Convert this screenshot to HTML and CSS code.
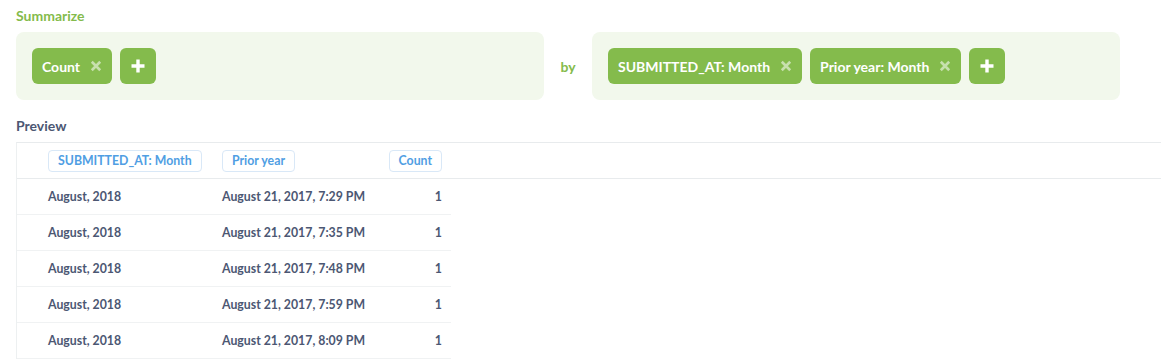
FILE: index.html
```html
<!DOCTYPE html>
<html>
<head>
<meta charset="utf-8">
<link rel="stylesheet" href="styles.css">
</head>
<body>
<div class="page">
  <div class="section-title green">Summarize</div>
  <div class="summarize-row">
    <div class="box">
      <div class="chip">Count <svg class="x" viewBox="0 0 10 10"><path d="M1.5 1.5 L8.5 8.5 M8.5 1.5 L1.5 8.5"/></svg></div>
      <div class="add"><svg class="plus" viewBox="0 0 16 16"><path d="M8 1.5 V14.5 M1.5 8 H14.5"/></svg></div>
    </div>
    <div class="by">by</div>
    <div class="box">
      <div class="chip">SUBMITTED_AT: Month <svg class="x" viewBox="0 0 10 10"><path d="M1.5 1.5 L8.5 8.5 M8.5 1.5 L1.5 8.5"/></svg></div>
      <div class="chip">Prior year: Month <svg class="x" viewBox="0 0 10 10"><path d="M1.5 1.5 L8.5 8.5 M8.5 1.5 L1.5 8.5"/></svg></div>
      <div class="add"><svg class="plus" viewBox="0 0 16 16"><path d="M8 1.5 V14.5 M1.5 8 H14.5"/></svg></div>
    </div>
  </div>
  <div class="section-title dark">Preview</div>
  <div class="table">
    <div class="head">
      <div class="cell c1"><span class="hpill">SUBMITTED_AT: Month</span></div>
      <div class="cell c2"><span class="hpill">Prior year</span></div>
      <div class="cell c3"><span class="hpill">Count</span></div>
    </div>
    <div class="row"><div class="cell c1">August, 2018</div><div class="cell c2">August 21, 2017, 7:29 PM</div><div class="cell c3">1</div></div>
    <div class="row"><div class="cell c1">August, 2018</div><div class="cell c2">August 21, 2017, 7:35 PM</div><div class="cell c3">1</div></div>
    <div class="row"><div class="cell c1">August, 2018</div><div class="cell c2">August 21, 2017, 7:48 PM</div><div class="cell c3">1</div></div>
    <div class="row"><div class="cell c1">August, 2018</div><div class="cell c2">August 21, 2017, 7:59 PM</div><div class="cell c3">1</div></div>
    <div class="row"><div class="cell c1">August, 2018</div><div class="cell c2">August 21, 2017, 8:09 PM</div><div class="cell c3">1</div></div>
  </div>
</div>
</body>
</html>
```
FILE: styles.css
```css
html, body {
  margin: 0;
  padding: 0;
  background: #ffffff;
  font-family: Lato, "Open Sans", sans-serif;
  overflow: hidden;
}
.page {
  padding: 7px 0 0 16px;
}
.section-title {
  font-size: 14px;
  font-weight: 700;
  line-height: 18px;
}
.green { color: #84BB4C; }
.dark { color: #4C5773; margin-top: 17px; }
.summarize-row {
  display: flex;
  align-items: center;
  margin-top: 7px;
}
.box {
  width: 528px;
  height: 68px;
  box-sizing: border-box;
  padding: 16px;
  background: #F2F8EC;
  border-radius: 8px;
  display: flex;
  align-items: center;
  gap: 8px;
}
.by {
  width: 48px;
  text-align: center;
  color: #84BB4C;
  font-size: 14px;
  font-weight: 700;
}
.chip {
  height: 36px;
  box-sizing: border-box;
  padding: 0 10px 0 10px;
  background: #84BB4C;
  color: #ffffff;
  border-radius: 6px;
  display: flex;
  align-items: center;
  gap: 10px;
  font-size: 14px;
  font-weight: 700;
}
.x {
  width: 12px;
  height: 12px;
  fill: none;
  stroke: rgba(255,255,255,0.55);
  stroke-width: 2.2;
}
.add {
  width: 36px;
  height: 36px;
  background: #84BB4C;
  border-radius: 6px;
  display: flex;
  align-items: center;
  justify-content: center;
}
.plus {
  width: 16px;
  height: 16px;
  fill: none;
  stroke: #ffffff;
  stroke-width: 3.4;
}
.table {
  margin-top: 7px;
  border-left: 1px solid #EDF0F1;
  border-top: 1px solid #E8EBED;
  color: #4C5773;
  font-size: 12.3px;
  font-weight: 700;
}
.head {
  display: flex;
  height: 35px;
  align-items: center;
  border-bottom: 1px solid #E8EBED;
}
.row {
  display: flex;
  width: 434px;
  height: 35px;
  align-items: center;
  border-bottom: 1px solid #F0F2F3;
}
.cell { box-sizing: border-box; }
.c1 { width: 197px; padding-left: 31px; }
.c2 { width: 166px; padding-left: 8px; }
.c3 { width: 71px; padding-right: 9px; text-align: right; }
.hpill {
  display: inline-block;
  height: 22px;
  line-height: 20px;
  box-sizing: border-box;
  padding: 0 9px;
  border: 1px solid #D9E8F7;
  border-radius: 4px;
  color: #509EE3;
}
```
